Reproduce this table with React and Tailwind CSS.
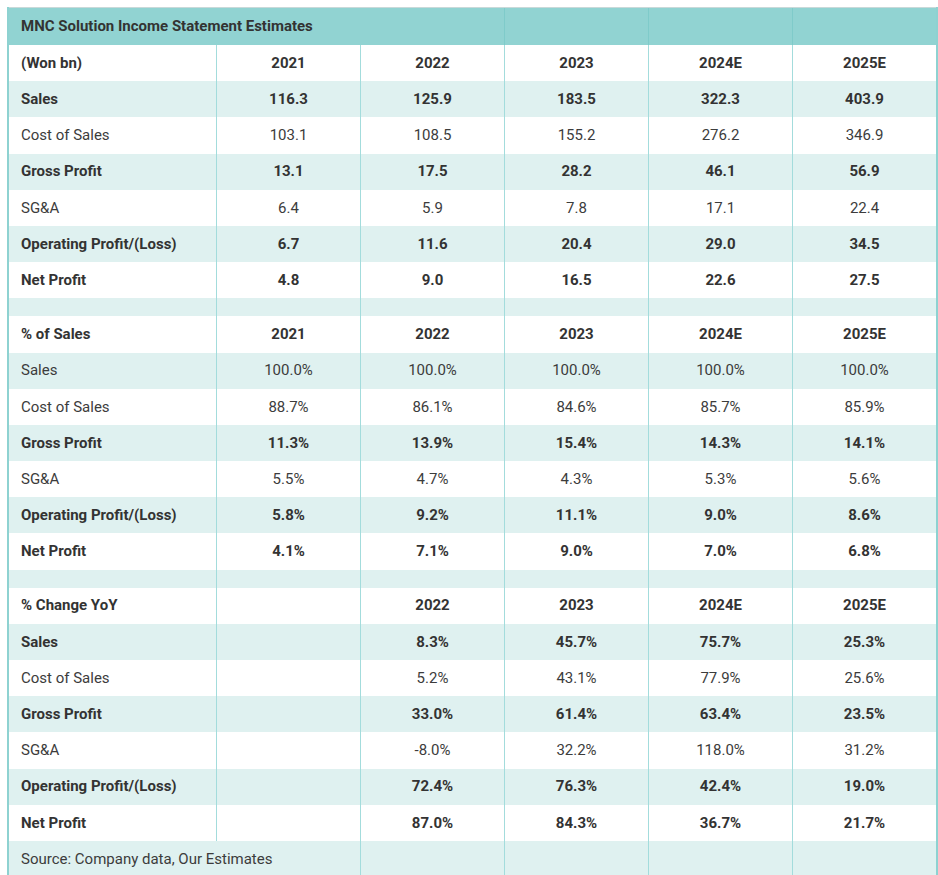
import React from 'react'

const cols = 'grid grid-cols-[208px_144px_144px_144px_144px_143px]'
const font = { fontFamily: 'Roboto, "Liberation Sans", sans-serif' }

const sections = [
  {
    head: ['(Won bn)', '2021', '2022', '2023', '2024E', '2025E'],
    rows: [
      { label: 'Sales', vals: ['116.3', '125.9', '183.5', '322.3', '403.9'], bold: true, shade: true },
      { label: 'Cost of Sales', vals: ['103.1', '108.5', '155.2', '276.2', '346.9'] },
      { label: 'Gross Profit', vals: ['13.1', '17.5', '28.2', '46.1', '56.9'], bold: true, shade: true },
      { label: 'SG&A', vals: ['6.4', '5.9', '7.8', '17.1', '22.4'] },
      { label: 'Operating Profit/(Loss)', vals: ['6.7', '11.6', '20.4', '29.0', '34.5'], bold: true, shade: true },
      { label: 'Net Profit', vals: ['4.8', '9.0', '16.5', '22.6', '27.5'], bold: true },
    ],
  },
  {
    head: ['% of Sales', '2021', '2022', '2023', '2024E', '2025E'],
    rows: [
      { label: 'Sales', vals: ['100.0%', '100.0%', '100.0%', '100.0%', '100.0%'], shade: true },
      { label: 'Cost of Sales', vals: ['88.7%', '86.1%', '84.6%', '85.7%', '85.9%'] },
      { label: 'Gross Profit', vals: ['11.3%', '13.9%', '15.4%', '14.3%', '14.1%'], bold: true, shade: true },
      { label: 'SG&A', vals: ['5.5%', '4.7%', '4.3%', '5.3%', '5.6%'] },
      { label: 'Operating Profit/(Loss)', vals: ['5.8%', '9.2%', '11.1%', '9.0%', '8.6%'], bold: true, shade: true },
      { label: 'Net Profit', vals: ['4.1%', '7.1%', '9.0%', '7.0%', '6.8%'], bold: true },
    ],
  },
  {
    head: ['% Change YoY', '', '2022', '2023', '2024E', '2025E'],
    rows: [
      { label: 'Sales', vals: ['', '8.3%', '45.7%', '75.7%', '25.3%'], bold: true, shade: true },
      { label: 'Cost of Sales', vals: ['', '5.2%', '43.1%', '77.9%', '25.6%'] },
      { label: 'Gross Profit', vals: ['', '33.0%', '61.4%', '63.4%', '23.5%'], bold: true, shade: true },
      { label: 'SG&A', vals: ['', '-8.0%', '32.2%', '118.0%', '31.2%'] },
      { label: 'Operating Profit/(Loss)', vals: ['', '72.4%', '76.3%', '42.4%', '19.0%'], bold: true, shade: true },
      { label: 'Net Profit', vals: ['', '87.0%', '84.3%', '36.7%', '21.7%'], bold: true },
    ],
  },
]

function Row({ label, vals, bold, shade }) {
  return (
    <div className={`${cols} h-[36.2px] ${shade ? 'bg-[#dff1f0]' : 'bg-white'} ${bold ? 'font-bold text-[#333333]' : 'text-[#3c3c3c]'}`}>
      <div className="flex items-center pl-3 border-r border-[#a3dcdc]">{label}</div>
      {vals.map((v, i) => (
        <div key={i} className={`flex items-center justify-center ${i < 4 ? 'border-r border-[#a3dcdc]' : ''}`}>
          {v}
        </div>
      ))}
    </div>
  )
}

function Spacer() {
  return (
    <div className={`${cols} h-[18px] bg-[#dff1f0]`}>
      {[0, 1, 2, 3, 4].map(i => (
        <div key={i} className="border-r border-[#a3dcdc]" />
      ))}
      <div />
    </div>
  )
}

export default function App() {
  return (
    <div className="min-h-screen bg-white pt-[7px] pl-[7px] text-[15px]" style={font}>
      <div className="w-[931px] border-l-2 border-r-2 border-[#8ed2d1]">
        {/* title */}
        <div className={`${cols} h-[38px] bg-[#91d3d2] font-bold text-[#333333] border-t border-[#c9d9d9]`}>
          <div className="col-span-3 flex items-center pl-3 border-r border-[#7fcbca]">
            MNC Solution Income Statement Estimates
          </div>
          <div className="border-r border-[#7fcbca]" />
          <div className="border-r border-[#7fcbca]" />
          <div />
        </div>

        {sections.map((s, si) => (
          <React.Fragment key={si}>
            {si > 0 && <Spacer />}
            <Row label={s.head[0]} vals={s.head.slice(1)} bold />
            {s.rows.map((r, ri) => (
              <Row key={ri} {...r} />
            ))}
          </React.Fragment>
        ))}

        {/* source */}
        <div className={`${cols} h-[36.2px] bg-[#dff1f0] text-[#3c3c3c]`}>
          <div className="col-span-2 flex items-center pl-3 border-r border-[#a3dcdc]">
            Source: Company data, Our Estimates
          </div>
          <div className="border-r border-[#a3dcdc]" />
          <div className="border-r border-[#a3dcdc]" />
          <div className="border-r border-[#a3dcdc]" />
          <div />
        </div>
      </div>
    </div>
  )
}
